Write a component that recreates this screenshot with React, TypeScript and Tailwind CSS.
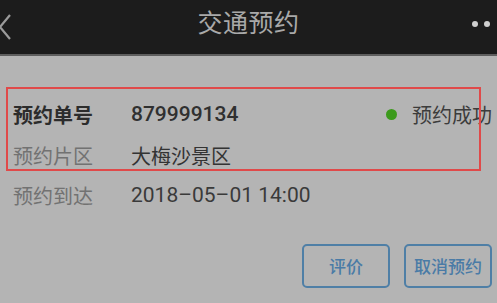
import React from "react";

const font = { fontFamily: '"Noto Sans CJK SC", "Noto Sans", sans-serif' };
const num = { fontFamily: 'Roboto, "Noto Sans CJK SC", sans-serif' };

export default function App() {
  return (
    <div
      className="relative w-[497px] h-[303px] overflow-hidden bg-[#b4b4b4]"
      style={font}
    >
      {/* Header */}
      <div className="relative flex h-[56px] items-center justify-center bg-[#1c1c1c] border-b-2 border-[#5e5e5e]">
        <svg
          className="absolute left-0 top-[14px]"
          width="12"
          height="26"
          viewBox="0 0 12 26"
        >
          <path d="M10 1 L0 13 L10 25" fill="none" stroke="#9a9a9a" strokeWidth="2.2" />
        </svg>
        <div className="-mt-[12px] text-[25px] leading-none text-[#a9a9a9] tracking-[0.5px]">
          交通预约
        </div>
        <div className="absolute right-[7px] top-[21px] flex gap-[6px]">
          <span className="block h-[6px] w-[6px] rounded-full bg-[#cfcfcf]" />
          <span className="block h-[6px] w-[6px] rounded-full bg-[#cfcfcf]" />
        </div>
      </div>

      {/* Rows */}
      <div className="flex flex-col pt-[38px] pl-[13px] pr-[5px] text-[20px]">
        <div className="flex h-[41px] items-center">
          <div className="w-[118px] font-semibold text-[#2c2c2c]">预约单号</div>
          <div className="flex-1 text-[21px] font-medium text-[#303030]" style={num}>
            879999134
          </div>
          <div className="flex items-center gap-[15px]">
            <span className="block h-[11px] w-[11px] rounded-full bg-[#3c9a1c]" />
            <span className="text-[#3c3c3c]">预约成功</span>
          </div>
        </div>
        <div className="flex h-[41px] items-center">
          <div className="w-[118px] text-[#727272]">预约片区</div>
          <div className="flex-1 text-[#333333]">大梅沙景区</div>
        </div>
        <div className="flex h-[40px] items-center">
          <div className="w-[118px] text-[#727272]">预约到达</div>
          <div className="flex-1 text-[21px] text-[#3a3a3a]" style={num}>
            2018–05–01 14:00
          </div>
        </div>
      </div>

      {/* Buttons */}
      <div className="mt-[28px] flex justify-end gap-[14px] pr-[5px]">
        <button className="flex h-[44px] w-[88px] items-center justify-center rounded-[5px] border-2 border-[#4f7fa6] text-[17px] font-medium text-[#4a7ba6]">
          评价
        </button>
        <button className="flex h-[44px] w-[88px] items-center justify-center rounded-[5px] border-2 border-[#4f7fa6] text-[17px] font-medium text-[#4a7ba6]">
          取消预约
        </button>
      </div>

      {/* Red annotation box */}
      <div className="absolute left-[6px] top-[87px] h-[84px] w-[475px] border-2 border-[#e04a4a]" />
    </div>
  );
}
